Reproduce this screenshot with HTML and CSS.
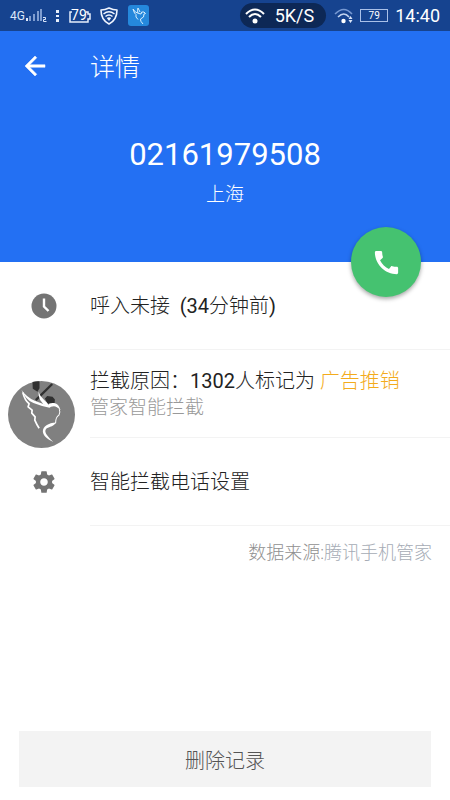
FILE: index.html
```html
<!DOCTYPE html>
<html lang="zh-CN">
<head>
<meta charset="utf-8">
<meta name="viewport" content="width=device-width, initial-scale=1">
<title>详情</title>
<link rel="stylesheet" href="styles.css">
</head>
<body>
<div class="screen">
  <div class="status">
    <div class="status-group">
      <span class="network">4G</span>
      <svg class="signal" width="22" height="14" viewBox="0 0 22 14">
        <path fill="#dce7fa" d="M1 9h2v3H1z"/>
        <path fill="#7f9dd0" d="M4 7h2v5H4zM8 5h2v7H8zM12 2h2v10h-2zM15 0h2v12h-2z"/>
        <path fill="none" stroke="#dce7fa" d="M18 8.500h2.500v2H18.500v2h3"/>
      </svg>
      <svg class="dots" width="3" height="12" viewBox="0 0 3 12"><path fill="#e6eefb" d="M0 0h3v3H0zM0 5h3v2H0zM0 9h3v3H0z"/></svg>
      <span class="battery-left">
        <svg width="22" height="14" viewBox="0 0 22 14"><path fill="none" stroke="#e6eefb" stroke-width="1.500" d="M3 3H1v10h18V10h2V5h-2V3h-2"/></svg>
        <span class="battery-count">79</span>
      </span>
      <svg class="shield" width="18" height="18" viewBox="0 0 18 18">
        <path fill="none" stroke="#f0f5ff" stroke-width="1.600" stroke-linejoin="round" d="M9 1Q13 3 17 3Q17 13 9 17Q1 13 1 3Q5 3 9 1Z"/>
        <path fill="none" stroke="#f0f5ff" stroke-width="1.500" d="M3.500 7Q9 2.500 14.500 7M5.500 9.500Q9 6.500 12.500 9.500"/>
        <path fill="#f0f5ff" d="M6.800 11Q9 9.500 11.200 11L9 14z"/>
      </svg>
      <svg class="app" width="21" height="21" viewBox="0 0 21 21">
        <rect width="21" height="21" rx="3" fill="#2588dc"/>
        <path fill="none" stroke="#d7efff" stroke-linejoin="round" d="M5 4Q7 8 11 8.500L13 9Q13 6 16 7L17.500 8.500L16 9L15.500 12L12.500 14Q12 16 15 19M5 4L6.500 8L8 9.500L8 12L10 14.500M10 8Q9 6 10 3L12 7"/>
      </svg>
    </div>
    <div class="status-group">
      <div class="speed">
        <svg width="20" height="16" viewBox="0 0 20 16"><g fill="none" stroke="#fff" stroke-width="2"><path d="M1 6Q10-3 19 6"/><path d="M4 9Q10 3 16 9"/></g><circle cx="10" cy="13" r="2.500" fill="#fff"/></svg>
        <span>5K/S</span>
      </div>
      <svg class="wifi" width="20" height="16" viewBox="0 0 20 16"><g fill="none" stroke-width="1.600"><path stroke="#7698d2" d="M1 6Q10-3 18 6"/><path stroke="#c4d5f1" d="M4 9Q10 3 15 9"/></g><circle cx="9.500" cy="13" r="2.200" fill="#fff"/><path fill="#dce7fa" d="M14.500 11L16.500 8L18.500 11zM14.500 12L16.500 15L18.500 12z"/></svg>
      <span class="battery">79</span>
      <time class="time">14:40</time>
    </div>
  </div>

  <header class="hero">
    <div class="toolbar">
      <button class="back" type="button" aria-label="返回">
        <svg width="30" height="30" viewBox="0 0 24 24"><path fill="#fff" stroke="#fff" stroke-width=".4" d="M20 11H7.830l5.590-5.590L12 4l-8 8 8 8 1.410-1.410L7.830 13H20v-2z"/></svg>
      </button>
      <h1 class="title">详情</h1>
    </div>
    <div class="number">02161979508</div>
    <div class="place">上海</div>
    <button class="call" type="button" aria-label="拨打">
      <svg width="31" height="31" viewBox="0 0 24 24"><path fill="#fff" d="M20.010 15.380c-1.230 0-2.420-.2-3.530-.56-.35-.12-.74-.03-1.010.24l-1.570 1.970c-2.830-1.350-5.480-3.900-6.890-6.830l1.950-1.660c.27-.28.35-.67.24-1.020-.37-1.110-.56-2.300-.56-3.530 0-.54-.45-.99-.99-.99H4.190C3.650 3 3 3.240 3 3.990 3 13.280 10.730 21 20.010 21c.71 0 .99-.63.990-1.180v-3.450c0-.54-.45-.99-.99-.99z"/></svg>
    </button>
  </header>

  <main class="list">
    <section class="row">
      <div class="row-icon">
        <svg width="26" height="26" viewBox="0 0 26 26"><circle cx="13" cy="13" r="12.500" fill="#747474"/><path fill="none" stroke="#fff" stroke-width="2.400" d="M13 5.500V13.500L17.500 18"/></svg>
      </div>
      <div class="row-body"><p class="line">呼入未接&nbsp; <span class="latin">(34</span>分钟前<span class="latin">)</span></p></div>
    </section>
    <section class="row">
      <div class="row-icon">
        <svg class="bird" width="67" height="67" viewBox="0 0 200 200">
          <circle cx="100" cy="100" r="100" fill="#808080"/>
          <path fill="#303030" d="M73 3Q82 0 94 1L94 22L88 32L74 23zM110 52L117 45L133 47L140 55L139 67L118 68z"/>
          <path stroke="#303030" stroke-width="7" d="M83 57L132 9"/>
          <path fill="#fff" d="M40 26Q55 48 80 59Q102 68 118 73Q124 64 138 66Q151 68 157 87Q145 75 137 75Q126 76 124 80Q98 75 76 66Q54 58 40 26z"/>
          <path fill="#fff" d="M91 32Q96 47 108 57Q118 65 124 76L116 76Q89 61 91 32z"/>
          <path fill="none" stroke="#fff" stroke-width="5" stroke-linejoin="round" d="M44 34Q50 58 63 68L60 77L72 87L71 96L81 107L80 117Q85 129 93 141"/>
          <path fill="#fff" d="M144 124C120 125 104 136 104 151C105 164 117 174 135 182C119 165 109 155 112 146C116 136 135 139 144 124z"/>
          <path fill="none" stroke="#fff" stroke-width="3" d="M153 84Q157 92 152 102Q142 108 142 126"/>
        </svg>
      </div>
      <div class="row-body">
        <p class="line">拦截原因：<span class="latin">1302</span>人标记为 <span class="tag">广告推销</span></p>
        <p class="sub">管家智能拦截</p>
      </div>
    </section>
    <section class="row">
      <div class="row-icon">
        <svg width="26" height="26" viewBox="0 0 24 24"><path fill="#747474" d="M19.430 12.980c.04-.32.07-.64.07-.98s-.03-.66-.07-.98l2.110-1.650c.19-.15.24-.42.12-.64l-2-3.460c-.12-.22-.39-.3-.61-.22l-2.490 1c-.52-.4-1.080-.73-1.690-.98l-.38-2.650C14.460 2.180 14.250 2 14 2h-4c-.25 0-.46.18-.49.42l-.38 2.650c-.61.25-1.170.59-1.690.98l-2.490-1c-.23-.09-.49 0-.61.22l-2 3.460c-.13.22-.07.49.12.64l2.110 1.650c-.04.32-.07.65-.07.98s.03.66.07.98l-2.110 1.650c-.19.15-.24.42-.12.64l2 3.460c.12.22.39.3.61.22l2.490-1c.52.4 1.080.73 1.690.98l.38 2.650c.03.24.24.42.49.42h4c.25 0 .46-.18.49-.42l.38-2.650c.61-.25 1.170-.59 1.690-.98l2.490 1c.23.09.49 0 .61-.22l2-3.460c.12-.22.07-.49-.12-.64l-2.110-1.650zM12 15.500c-1.930 0-3.500-1.570-3.500-3.500s1.570-3.500 3.500-3.500 3.500 1.570 3.500 3.500-1.570 3.500-3.500 3.500z"/></svg>
      </div>
      <div class="row-body"><p class="line">智能拦截电话设置</p></div>
    </section>
    <p class="source">数据来源:<span class="vendor">腾讯手机管家</span></p>
  </main>

  <footer class="footer"><button class="delete" type="button">删除记录</button></footer>
</div>
</body>
</html>
```
FILE: styles.css
```css
* {
  box-sizing: border-box;
}

body {
  margin: 0;
  background: #fff;
  color: #222;
  font-family: Roboto, "Noto Sans CJK SC", sans-serif;
  font-weight: 300;
}

h1,
p {
  margin: 0;
  font-weight: 300;
}

button {
  padding: 0;
  border: 0;
  font: inherit;
}

svg {
  display: block;
  flex: none;
}

.screen {
  display: flex;
  flex-direction: column;
  min-height: 100vh;
}

.status {
  display: flex;
  align-items: center;
  justify-content: space-between;
  height: 31px;
  padding: 0 10px;
  background: #16438f;
  color: #fff;
  font-weight: 400;
}

.status-group {
  display: flex;
  align-items: center;
}

.network {
  color: #dce7fa;
  font-size: 12px;
  line-height: 14px;
}

.dots {
  margin: 0 10px 0 9px;
}

.battery-left {
  position: relative;
}

.battery-count {
  position: absolute;
  inset: 0 2px 0 0;
  font-size: 14px;
  line-height: 12px;
  text-align: center;
}

.shield {
  margin: 0 10px 0 9px;
}

.speed {
  display: flex;
  align-items: center;
  gap: 10px;
  height: 25px;
  padding: 0 12px 0 5px;
  border-radius: 13px;
  background: #0d2856;
  font-size: 18px;
}

.wifi {
  margin: 0 6px 0 8px;
}

.battery {
  width: 28px;
  border: 1px solid #a9c0e8;
  font-size: 10px;
  line-height: 11px;
  text-align: center;
}

.time {
  margin-left: 7px;
  font-size: 18px;
}

.hero {
  position: relative;
  padding-bottom: 53px;
  background: #2370f3;
  color: #fff;
  text-align: center;
}

.toolbar {
  display: flex;
  align-items: center;
  height: 70px;
  padding-left: 20px;
}

.back {
  width: 30px;
  margin-right: 40px;
  background: none;
}

.title {
  padding-top: 4px;
  font-size: 25px;
  line-height: 30px;
}

.number {
  margin-top: 32px;
  font-size: 31px;
  font-weight: 400;
  line-height: 44px;
}

.place {
  margin-top: 3px;
  font-size: 19px;
  line-height: 29px;
}

.call {
  position: absolute;
  right: 29px;
  bottom: -35px;
  display: grid;
  place-items: center;
  width: 70px;
  height: 70px;
  border-radius: 50%;
  background: #45c270;
  box-shadow: 0 2px 4px rgb(0 0 0 / 35%);
}

.list {
  flex: 1;
}

.row {
  display: flex;
}

.row-icon {
  position: relative;
  display: grid;
  place-items: center;
  width: 87px;
  margin-right: 3px;
}

.bird {
  position: absolute;
  top: 31px;
  left: 8px;
}

.row-body {
  display: flex;
  flex: 1;
  flex-direction: column;
  justify-content: center;
  min-height: 88px;
  border-bottom: 1px solid #f3f3f3;
}

.line {
  font-size: 20px;
  line-height: 28px;
}

.latin {
  font-weight: 400;
}

.tag {
  color: #f3ab1c;
}

.sub {
  color: #999;
  font-size: 19px;
  line-height: 26px;
}

.source {
  padding: 14px 18px;
  color: #909090;
  font-size: 18px;
  line-height: 26px;
  text-align: right;
}

.vendor {
  color: #a5abb5;
}

.footer {
  padding: 0 19px 13px;
}

.delete {
  width: 100%;
  height: 56px;
  background: #f3f3f3;
  color: #555;
  font-size: 20px;
}
```
